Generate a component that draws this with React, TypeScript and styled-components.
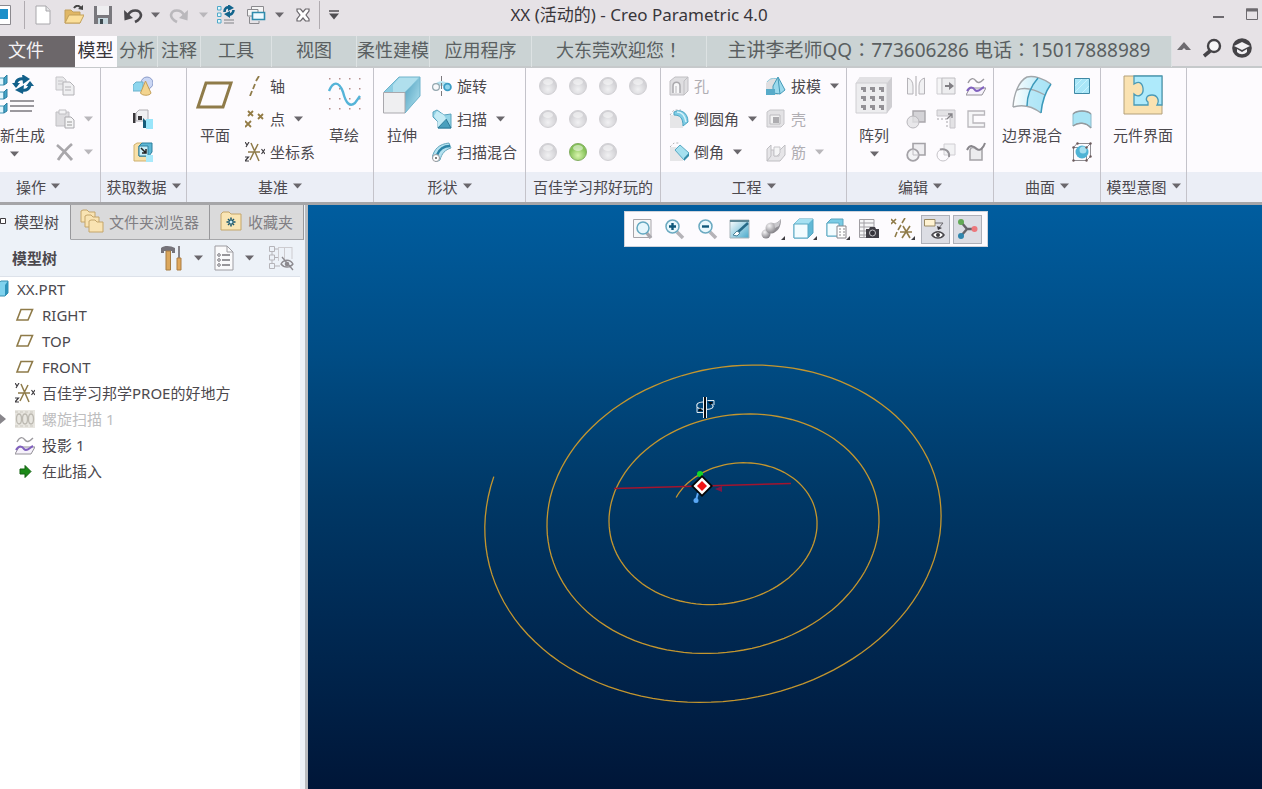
import React from "react";
import styled, { createGlobalStyle } from "styled-components";

const GlobalStyle = createGlobalStyle`
  * { box-sizing: border-box; }
  html, body, #root { height: 100%; }
  body {
    margin: 0;
    font-family: "Noto Sans", "Noto Sans CJK SC", sans-serif;
    font-size: 15px;
    color: #4c494e;
    overflow: hidden;
  }
  button {
    font: inherit;
    color: inherit;
    background: none;
    border: 0;
    padding: 0;
    cursor: default;
  }
  svg { display: block; flex: none; }
`;

/* ---------- layout ---------- */

const Window = styled.div`
  display: flex;
  flex-direction: column;
  height: 100vh;
  background: #e6e2e6;
`;

const TitleBar = styled.header`
  display: grid;
  grid-template-columns: 1fr auto 1fr;
  align-items: center;
  height: 36px;
  flex: none;
`;

const QuickAccess = styled.div`
  display: flex;
  align-items: center;
  height: 36px;
  padding-bottom: 6px;
`;

const QuickButton = styled.button<{ $w?: number }>`
  display: flex;
  align-items: center;
  justify-content: center;
  width: ${(p) => p.$w ?? 30}px;
  height: 28px;
`;

const Rule = styled.span<{ $before?: number }>`
  width: 1px;
  height: 28px;
  margin-left: ${(p) => p.$before ?? 0}px;
  background: #b0abb0;
`;

const Title = styled.h1`
  margin: 0;
  padding: 0 0 6px 16px;
  font-size: 17px;
  line-height: 24px;
  font-weight: 400;
  color: #38353a;
  white-space: nowrap;
`;

const WindowControls = styled.div`
  display: flex;
  justify-content: flex-end;
  gap: 22px;
  padding: 0 4px 8px 0;
`;

const TabBar = styled.nav`
  display: flex;
  height: 32px;
  flex: none;
  border-bottom: 2px solid #c6c9cb;
`;

const TabStrip = styled.div`
  display: flex;
  flex: 1;
  min-width: 0;
  background: #cbd3d4;
`;

const Tab = styled.button<{ $w?: number; $kind?: "file" | "active"; $notice?: boolean }>`
  ${(p) => (p.$w ? `flex: 0 0 ${p.$w}px;` : "flex: 1 1 auto;")}
  height: 31px;
  font-size: ${(p) => (p.$w ? 18 : 19)}px;
  ${(p) => (p.$notice ? `font-family: "Noto Sans", "Noto Sans CJK TC", sans-serif;` : "")}
  line-height: 26px;
  white-space: nowrap;
  color: ${(p) => (p.$kind === "file" ? "#f4f2f4" : p.$kind === "active" ? "#38353a" : "#5a5f61")};
  background: ${(p) => (p.$kind === "file" ? "#6c676a" : p.$kind === "active" ? "#fdfbfe" : "transparent")};
  border-right: 1px solid ${(p) => (p.$kind ? "transparent" : "#dde2e3")};
  padding-bottom: 3px;
  padding-right: ${(p) => (p.$kind === "file" ? 22 : 0)}px;
`;

const TabTools = styled.div`
  display: flex;
  align-items: center;
  gap: 9px;
  width: 90px;
  padding: 0 0 6px 2px;
`;

const ToolButton = styled.button`
  display: flex;
  align-items: center;
  justify-content: center;
  width: 20px;
  height: 24px;
`;

const Ribbon = styled.div`
  display: flex;
  height: 137px;
  flex: none;
  background: linear-gradient(#fdfbfe 0 104px, #ebeef6 104px);
  border-bottom: 3px solid #a5a5a8;
  overflow: hidden;
`;

const Group = styled.section<{ $w: number }>`
  display: flex;
  flex-direction: column;
  flex: 0 0 ${(p) => p.$w}px;
  min-width: 0;
  border-right: 1px solid #c4c3ca;
`;

const GroupBody = styled.div<{ $inset?: number }>`
  display: flex;
  height: 104px;
  padding: 1px 0 0 ${(p) => p.$inset ?? 0}px;
`;

const GroupFooter = styled.button<{ $shift?: number }>`
  display: flex;
  align-items: center;
  justify-content: center;
  gap: 5px;
  height: 28px;
  padding-right: ${(p) => p.$shift ?? 0}px;
  white-space: nowrap;
`;

const BigButton = styled.button<{ $w?: number; $start?: boolean }>`
  display: flex;
  flex-direction: column;
  align-items: ${(p) => (p.$start ? "flex-start" : "center")};
  flex: 0 0 ${(p) => p.$w ?? 56}px;
  padding-top: 6px;
  white-space: nowrap;
`;

const BigLabel = styled.span`
  margin-top: 8px;
  line-height: 24px;
`;

const BigCaret = styled.span<{ $inset?: number }>`
  padding: 4px 0 0 ${(p) => p.$inset ?? 0}px;
`;

const Stack = styled.div<{ $before?: number }>`
  display: flex;
  flex-direction: column;
  margin-left: ${(p) => p.$before ?? 0}px;
`;

const Command = styled.button<{ $muted?: boolean }>`
  display: flex;
  align-items: center;
  gap: 5px;
  height: 33px;
  white-space: nowrap;
  color: ${(p) => (p.$muted ? "#b0aeb3" : "inherit")};
`;

const CaretBox = styled.span`
  padding-left: 4px;
`;

const IconGrid = styled.div<{ $cols: number }>`
  display: grid;
  grid-template-columns: repeat(${(p) => p.$cols}, 30px);
  grid-auto-rows: 33px;
`;

const IconButton = styled.button`
  display: flex;
  align-items: center;
  justify-content: center;
`;

const Workspace = styled.div`
  display: flex;
  flex: 1;
  min-height: 0;
`;

const SidePanel = styled.aside`
  display: flex;
  flex-direction: column;
  flex: 0 0 308px;
  background: #edf2f8;
  border-right: 3px solid #b9bcc0;
`;

const PanelTabs = styled.div`
  display: flex;
  height: 35px;
  flex: none;
`;

const PanelTab = styled.button<{ $w: number; $active?: boolean }>`
  display: flex;
  align-items: center;
  gap: 5px;
  flex: 0 0 ${(p) => p.$w}px;
  padding: 0 0 2px ${(p) => (p.$active ? 0 : 9)}px;
  white-space: nowrap;
  color: ${(p) => (p.$active ? "#4c494e" : "#807e83")};
  background: ${(p) => (p.$active ? "#edf2f8" : "#dadadb")};
  border-right: 1px solid #98989b;
  border-bottom: 1px solid ${(p) => (p.$active ? "#edf2f8" : "#a6a7aa")};
`;

const PanelHeader = styled.div`
  display: flex;
  align-items: center;
  height: 36px;
  flex: none;
  padding: 0 5px 0 12px;
`;

const PanelTitle = styled.h2`
  flex: 1;
  margin: 0;
  font-size: 15px;
  line-height: 24px;
  font-weight: 600;
`;

const HeaderButton = styled.button<{ $w: number }>`
  display: flex;
  align-items: center;
  justify-content: center;
  width: ${(p) => p.$w}px;
  height: 30px;
`;

const Tree = styled.ul`
  flex: 1;
  margin: 0 5px 0 0;
  padding: 0;
  list-style: none;
  background: #ffffff;
  border-top: 1px solid #dde2ea;
`;

const TreeRow = styled.li<{ $root?: boolean; $muted?: boolean }>`
  display: grid;
  grid-template-columns: ${(p) => (p.$root ? "9px 1fr" : "8px 20px 1fr")};
  column-gap: ${(p) => (p.$root ? 8 : 7)}px;
  align-items: center;
  height: 26px;
  line-height: 24px;
  padding-bottom: 2px;
  color: ${(p) => (p.$muted ? "#bebec0" : "inherit")};
`;

const Canvas = styled.main`
  position: relative;
  flex: 1;
  min-width: 0;
  overflow: hidden;
  background: linear-gradient(#005d9f 0%, #004c84 26%, #003866 50%, #002a54 70%, #001638 100%);
`;

const Scene = styled.svg`
  width: 100%;
  height: 100%;
`;

const ViewToolbar = styled.div`
  position: absolute;
  top: 6px;
  left: 316px;
  display: flex;
  align-items: center;
  justify-content: space-between;
  width: 364px;
  height: 36px;
  padding: 0 5px 0 3px;
  background: #fdfbfe;
  border: 1px solid #cfd3dc;
`;

const ViewButton = styled.button<{ $on?: boolean }>`
  display: flex;
  align-items: center;
  justify-content: center;
  width: 29px;
  height: 29px;
  background: ${(p) => (p.$on ? "#dcdde4" : "transparent")};
  border: 1px solid ${(p) => (p.$on ? "#aeb0b8" : "transparent")};
`;

/* ---------- icons ---------- */

type IconProps = { w?: number; h?: number; children: React.ReactNode };
const Icon = ({ w = 20, h = 20, children }: IconProps) => (
  <svg width={w} height={h} viewBox={`0 0 ${w} ${h}`} fill="none" aria-hidden="true">
    {children}
  </svg>
);

const Caret = ({ muted = false }: { muted?: boolean }) => (
  <Icon w={9} h={6}>
    <path d="M0 0.500H9L4.500 5.500Z" fill={muted ? "#b9b7bb" : "#6a676c"} />
  </Icon>
);

const NewFile = () => (
  <Icon><path d="M3 1H13L17 5.500V19H3Z" fill="#fff" stroke="#a8a7ab" /><path d="M13 1V6H17" stroke="#a8a7ab" fill="#e5e5e7" /></Icon>
);
const OpenFile = () => (
  <Icon>
    <path d="M1 18V5H7L9 7H16V18Z" fill="#e0b765" stroke="#c2a05c" />
    <path d="M1 18L5 10H20L16 18Z" fill="#fbdf9a" stroke="#c2a05c" />
    <path d="M10 3C12 0 15 0 17 3" stroke="#444" strokeWidth="2" /><path d="M14 4L19 5L19 0Z" fill="#444" />
  </Icon>
);
const Save = () => (
  <Icon>
    <path d="M1 1H19V19H1Z" fill="#79787d" /><path d="M4 1H16V10H4Z" fill="#eeeef0" />
    <path d="M5 13H15V19H5Z" fill="#c7d8df" /><path d="M7 14H10V19H7Z" fill="#3d4a50" />
  </Icon>
);
const Undo = () => (
  <Icon><path d="M5 10C8 4 17 4 18 10C18 13 16 15 12 17" stroke="#4b494d" strokeWidth="2.600" /><path d="M1 5L1.500 15.500L10 13Z" fill="#4b494d" /></Icon>
);
const Redo = () => (
  <Icon><path d="M15 10C12 4 3 4 2 10C2 13 4 15 8 17" stroke="#bab8bc" strokeWidth="2.600" /><path d="M19 5L18.500 15.500L10 13Z" fill="#bab8bc" /></Icon>
);
const SmallRegen = () => (
  <Icon>
    <path d="M1.500 1.500H5V5H1.500ZM1.500 8H5V11.500H1.500ZM1.500 14.500H5V18H1.500Z" fill="#e4f6fb" stroke="#4fa9c9" />
    <path d="M8.500 7C8.500 3 11 2 13 2.500" stroke="#12648c" strokeWidth="2.600" /><path d="M12 -1L18 3L12 6Z" fill="#12648c" />
    <path d="M17.500 5C17.500 8 15 10 13 9.500" stroke="#12648c" strokeWidth="2.600" /><path d="M14 6L8 9L14 13Z" fill="#12648c" />
    <path d="M8 15H18M8 18H18" stroke="#a3a2a6" strokeWidth="1.500" />
  </Icon>
);
const Windows = () => (
  <Icon>
    <path d="M5.500 1.500H17.500V8H5.500Z" fill="#f5f5f5" stroke="#8b8a8e" /><path d="M1.500 4.500H12V11H1.500Z" fill="#f5f5f5" stroke="#8b8a8e" />
    <path d="M6.500 7.500H18.500V14.500H6.500Z" fill="#eefaff" stroke="#2f8cad" strokeWidth="1.600" />
    <path d="M3.500 12V18.500H13V16" stroke="#8b8a8e" />
  </Icon>
);
const CloseX = () => (
  <Icon w={16} h={16}>
    <path d="M2 2H5.500L8 5L10.500 2H14V4L11 8L14 12V14H10.500L8 11L5.500 14H2V12L5 8L2 4Z" fill="#fff" stroke="#6a676c" strokeWidth="1.200" />
  </Icon>
);

const RegenBig = () => (
  <Icon w={36} h={40}>
    {[0, 14, 28].map((y) => (
      <g key={y}>
        <path d={`M-3 ${y + 3}H4V${y + 10}H-3Z`} fill="#e1f6fd" stroke="#4196b8" />
        <path d={`M4 ${y + 3}L7 ${y}V${y + 8}L4 ${y + 10}Z`} fill="#43a5c9" stroke="#2e7fa0" />
      </g>
    ))}
    <path d="M16 9C16 5 20 3 24 4" stroke="#12608a" strokeWidth="3" /><path d="M22 -1L30 4L23 9Z" fill="#12608a" />
    <path d="M30 9C30 14 26 16 22 15" stroke="#12608a" strokeWidth="3" /><path d="M24 10L15 15L23 19Z" fill="#12608a" />
    <path d="M12 8H20L16 13Z" fill="#12608a" /><path d="M26 11L30 6L34 11Z" fill="#12608a" />
    <path d="M10 26H34M10 31H34M10 36H32" stroke="#9b999e" strokeWidth="2" />
  </Icon>
);
const Copy = () => (
  <Icon>
    <path d="M1 1H8L11 4V14H1Z" fill="#e8e8ea" stroke="#c6c5c9" /><path d="M3 5H8M3 8H8" stroke="#c3c2c6" />
    <path d="M8 6H15L19 10V19H8Z" fill="#efeff1" stroke="#b3b2b6" /><path d="M10 11H16M10 14H16" stroke="#b5b4b8" />
  </Icon>
);
const Paste = () => (
  <Icon>
    <path d="M1 3H14V17H1Z" fill="#dddcdf" stroke="#c0bfc3" /><path d="M4 1H11V5H4Z" fill="#f3f3f5" stroke="#c0bfc3" />
    <path d="M10 8H16L19 11V19H10Z" fill="#f4f4f5" stroke="#a9a8ac" /><path d="M12 13H17M12 16H17" stroke="#999" />
  </Icon>
);
const Delete = () => (
  <Icon><path d="M2 3C7 7 12 12 17 18M17 2C11 7 7 12 3 18" stroke="#a9a7ab" strokeWidth="2.800" /></Icon>
);
const UserFeature = () => (
  <Icon>
    <circle cx="14" cy="7" r="6" fill="#cad6f4" stroke="#8a9bc9" />
    <path d="M0 9L3 6H10V15H0Z" fill="#8ed6ee" stroke="#6bb1cb" />
    <path d="M12.500 5L18 17C17 20 9 20 7.500 17Z" fill="#f3d48f" stroke="#c3a05a" />
  </Icon>
);
const CopyGeom = () => (
  <Icon>
    <path d="M3 4L6 1H15V12H3Z" fill="#f0f0f2" stroke="#b0aeb3" /><path d="M0 4H2.500V14H0Z" fill="#39373b" />
    <path d="M5 7H9V11H5Z" fill="#39373b" /><path d="M10 9L13 12V19H10Z" fill="#155c7a" /><path d="M13 10H20V20H13Z" fill="#99e5fa" />
  </Icon>
);
const Shrinkwrap = () => (
  <Icon>
    <path d="M1 3L4 1H9V6H6V14H14V19H1Z" fill="#f8e0a8" stroke="#cdb06f" />
    <path d="M6 4L9 1H19V10L16 14H6Z" fill="#5db7d5" stroke="#2c7e9d" /><path d="M6 4H15V14H6Z" fill="#c9eef8" stroke="#2c7e9d" />
    <path d="M8 6L13 11M13 7V11H9" stroke="#222" strokeWidth="1.500" /><path d="M13 13H20V20H13Z" fill="#a9e9fa" />
  </Icon>
);
const PlaneBig = () => (
  <Icon w={40} h={40}><path d="M11 8H36L28 32H3Z" stroke="#8f7b49" strokeWidth="3" /></Icon>
);
const Axis = () => (
  <Icon><path d="M14 0L11 5M10 8L8 13M7 15L5 20" stroke="#8f7b49" strokeWidth="1.800" /></Icon>
);
const Points = () => (
  <Icon><path d="M3 2L8 7M8 2L3 7M13 5L18 10M18 5L13 10M0 12L6 18M6 12L0 18" stroke="#927b45" strokeWidth="1.800" /></Icon>
);
const Csys = () => (
  <Icon>
    <path d="M3 10H15M5 18L13 2M6 1L14 19" stroke="#8f7b49" strokeWidth="1.500" />
    <path d="M0 0L2 3M4 0L1 5M0 15H3.500L0 19H4M16.500 7L20 12M20 7L16.500 12" stroke="#3f3d41" strokeWidth="1.200" />
  </Icon>
);
const SketchBig = () => (
  <Icon w={36} h={40}>
    {[3, 13, 23, 33].map((y) => [3, 13, 23, 33].map((x) => <path key={`${x}-${y}`} d={`M${x} ${y}h1.500v1.500h-1.500z`} fill="#b58e8a" />))}
    <path d="M3 16C7 6 13 6 17 17C20 29 24 32 29 28L34 21" stroke="#55b4d8" strokeWidth="2.400" />
  </Icon>
);
const ExtrudeBig = () => (
  <Icon w={40} h={40}>
    <path d="M2 17L17 2H38V20L23 38H2Z" fill="#a7dcec" />
    <path d="M17 2H38L23 17H2Z" fill="#8ccde2" /><path d="M18 2H37L30 10V17H11V10Z" fill="#bfe7f2" opacity="0.700" />
    <path d="M38 2L23 17V38L38 21Z" fill="url(#blueSide)" />
    <path d="M1.500 17.500H23V38H1.500Z" fill="#efeff1" stroke="#a9a8ad" /><path d="M2 17L17 2H38V21L23 38" stroke="#6fb3cb" />
  </Icon>
);
const Revolve = () => (
  <Icon>
    <path d="M2 9C6 4 13 4 18 9L15 12C12 9 7 9 4 12Z" fill="#b4e1ee" />
    <path d="M9.500 0V5M9.500 7V13M9.500 15V20" stroke="#7b797d" />
    <circle cx="4" cy="11" r="3.400" fill="#f7f9fb" stroke="#93a6ae" strokeWidth="1.200" /><circle cx="15.500" cy="11" r="3.400" fill="#8fd4ec" stroke="#3b9cc4" strokeWidth="1.800" />
  </Icon>
);
const Sweep = () => (
  <Icon>
    <path d="M1 3L5 1L12 6L19 5V19H6V13L1 8Z" fill="#93d3e6" stroke="#5aa3bd" />
    <path d="M6 19L14 10L19 19Z" fill="#4a9fbd" stroke="#2d7896" /><path d="M5 2L12 6L14 10L6 18V13L2 7Z" fill="#c5ebf5" />
  </Icon>
);
const SweptBlend = () => (
  <Icon>
    <path d="M0 16C2 7 7 2 17 1L19 6C13 8 10 11 8 18L4 20Z" fill="#b2e1f0" stroke="#6aa8be" />
    <path d="M5 13C7 8 11 4 18 4" stroke="#2b83a6" strokeWidth="2.400" /><circle cx="4" cy="16" r="3.500" fill="#fff" stroke="#9a999d" /><circle cx="4" cy="16" r="1" fill="#555" />
  </Icon>
);
const Ball = ({ on = false }: { on?: boolean }) => (
  <Icon>
    <circle cx="10" cy="10" r="8.500" fill={on ? "url(#ballOn)" : "url(#ballOff)"} stroke={on ? "#83ad62" : "#d0cfd3"} />
    <ellipse cx="10" cy="6" rx="5" ry="3" fill="#fff" opacity="0.500" />
  </Icon>
);
const Hole = () => (
  <Icon>
    <path d="M1 5L6 1H19V15L15 19H1Z" fill="#dfdee1" stroke="#c0bfc3" /><path d="M15 19V5L19 1" stroke="#c0bfc3" />
    <path d="M4 17V10C4 5 11 5 11 10V17" fill="#f7f7f8" stroke="#aaa9ad" strokeWidth="1.500" /><path d="M7 17V10" stroke="#b9b8bc" />
  </Icon>
);
const Round = () => (
  <Icon>
    <path d="M1 6H9C13 8 14 12 14 19H1Z" fill="#e6e6e8" /><path d="M1 6L5 1H12" stroke="#b5b4b8" strokeDasharray="2 2" />
    <path d="M5 3C10 0 19 2 19 13L14 17C14 9 11 6 5 6Z" fill="#7fcde6" stroke="#4ba3c1" />
    <path d="M8 3C13 3 16 7 17 13" stroke="#d8f3fa" strokeWidth="1.500" />
  </Icon>
);
const Chamfer = () => (
  <Icon>
    <path d="M1 5H7L14 12V19H1Z" fill="#e6e6e8" /><path d="M1 5L5 1H10" stroke="#b5b4b8" strokeDasharray="2 2" />
    <path d="M11 3L20 11L15 18L6 8Z" fill="#a5e0ef" stroke="#5aa9c4" /><path d="M20 11V14L15 19V16Z" fill="#358ba9" />
  </Icon>
);
const Draft = () => (
  <Icon>
    <path d="M0 7L5 2H12V19H0Z" fill="#dfdfe1" /><path d="M1 6C4 2 8 2 12 3" stroke="#8cc9dc" />
    <path d="M7 10L12 1L19 14L14 18L7 17Z" fill="#9cd9ec" stroke="#459ab8" /><path d="M12 2L14 18" stroke="#459ab8" /><path d="M0 13H9V19H0Z" fill="#58abc9" />
  </Icon>
);
const Shell = () => (
  <Icon>
    <path d="M1 3L4 1H18V15L15 18H1Z" fill="#e3e2e5" stroke="#c6c5c9" /><path d="M4 6H14V15H4Z" fill="#f3f3f4" stroke="#bbbabe" /><path d="M7 8H13V14H7Z" fill="#adacb0" />
  </Icon>
);
const Rib = () => (
  <Icon>
    <path d="M1 7L5 3V8H8V14H13V9L19 3V13L14 19H1Z" fill="#e6e5e8" stroke="#bfbec2" /><path d="M8 5H14V11L11 14H8Z" fill="#f5f5f6" stroke="#c6c5c9" /><path d="M1 19L5 14V8" stroke="#bfbec2" />
  </Icon>
);
const PatternBig = () => (
  <Icon w={40} h={40}>
    <path d="M2 8L6 2H38V32L33 38H2Z" fill="#cfced2" /><path d="M2 8L6 2H38L33 8Z" fill="#e2e1e4" />
    <path d="M2 8H33V38H2Z" fill="#ededef" stroke="#cfced2" />
    {[12, 21, 30].map((y) => [7, 16, 25].map((x) => <path key={`${x}-${y}`} d={`M${x} ${y}h5v5h-3v-2h-2z`} fill="#929095" />))}
  </Icon>
);
const Mirror = () => (
  <Icon><path d="M10 0V20" stroke="#a9a7ab" /><path d="M1.500 2V18H7V10C7 6 5 3 1.500 2ZM18.500 2V18H13V10C13 6 15 3 18.500 2Z" fill="#f1f1f3" stroke="#b5b3b8" /></Icon>
);
const Extend = () => (
  <Icon><path d="M1 2H6V18H1Z" fill="#f5f5f6" stroke="#cfced2" /><path d="M6 2H19V18H6Z" fill="#ededef" stroke="#bfbec2" /><path d="M9 10H14" stroke="#807e83" strokeWidth="2" /><path d="M13 6L18 10L13 14Z" fill="#807e83" /></Icon>
);
const Project = () => (
  <Icon>
    <path d="M2 7C5 1 8 2 10 5C12 8 15 6 18 3" stroke="#9c9a9f" strokeWidth="1.400" />
    <path d="M4 12H20L16 19H0Z" fill="#f6f2fb" stroke="#949198" /><path d="M1 15C4 10 7 11 9 14C12 17 14 13 18 11" stroke="#8161bf" strokeWidth="2" />
  </Icon>
);
const Merge = () => (
  <Icon><path d="M7 2H19V13H7Z" fill="#d4d3d7" stroke="#a9a7ac" strokeWidth="1.400" /><circle cx="7" cy="13" r="6" fill="#e2e2e5" fillOpacity="0.800" stroke="#b9b7bc" /></Icon>
);
const Trim = () => (
  <Icon><path d="M1 1H19V19H14V7H1Z" fill="#e3e2e5" stroke="#c6c4c9" /><path d="M1 10H11V19" stroke="#a6a4a9" strokeDasharray="2 2" /><path d="M11 10L16 5M12 5H16V9" stroke="#858388" strokeWidth="1.300" /></Icon>
);
const Offset = () => (
  <Icon><path d="M18.500 2H2V18H18.500V14H7V6H18.500Z" fill="#f5f5f7" stroke="#b9b7bc" strokeWidth="1.300" /></Icon>
);
const Intersect = () => (
  <Icon><path d="M7 1.500H19V13H7Z" fill="#eeedf0" stroke="#a4a2a7" strokeWidth="1.600" /><circle cx="7" cy="13" r="5.800" fill="#f3f3f5" stroke="#a4a2a7" strokeWidth="1.800" /><path d="M7 7V13H13" stroke="#c0bec3" /></Icon>
);
const Split = () => (
  <Icon><path d="M8 2H19V13H8Z" fill="#f2f2f4" stroke="#d0ced3" /><circle cx="7" cy="13" r="6" stroke="#c6c4c9" /><path d="M4 7.500C10 6 14 10 13 15" stroke="#97959a" strokeWidth="2" /></Icon>
);
const Solidify = () => (
  <Icon><path d="M4 8V18H16V6C14 9 12 8 10 7C7 5 5 5 4 8Z" fill="#ececee" stroke="#a4a2a7" strokeWidth="1.500" /><path d="M1 8C4 2 8 4 11 7C14 9 17 7 19 1" stroke="#89878c" strokeWidth="2" /></Icon>
);
const BoundaryBig = () => (
  <Icon w={40} h={40}>
    <path d="M1 32C2 18 7 6 15 2C22 0 32 4 39 9C34 16 30 27 29 38C20 31 11 29 1 32Z" fill="url(#surface)" />
    <path d="M26 3C32 4 36 6 39 9C34 16 30 27 29 38L15 31C16 19 20 11 26 3Z" fill="#a9e4f6" opacity="0.700" />
    <path d="M1 32C2 18 7 6 15 2C22 0 32 4 39 9M1 32C11 29 20 31 29 38M5 15C14 11 24 15 33 20" stroke="#a2a7ab" strokeWidth="1.400" />
    <path d="M26 3C19 11 15 19 15 31M39 9C34 16 30 27 29 38" stroke="#3b99ba" strokeWidth="1.500" />
  </Icon>
);
const Fill = () => (
  <Icon><path d="M2.500 2.500H17.500V17.500H2.500Z" fill="#a9e6f8" stroke="#3f88a4" /><path d="M3 10L10 3M3 16L16 3M10 17L17 10" stroke="#c9f3fd" /></Icon>
);
const StyleSurface = () => (
  <Icon><path d="M1 5C5 1 15 1 19 5V19C14 13 6 13 1 17Z" fill="#a9e4f5" stroke="#8ab9c9" /><path d="M1 5C5 1 15 1 19 5M1 17C6 13 14 13 19 19" stroke="#949a9e" strokeWidth="1.400" /></Icon>
);
const Freestyle = () => (
  <Icon>
    <path d="M1.500 5.500L5 1.500H18.500V14.500L14.500 18.500H1.500ZM1.500 5.500H14.500V18.500M14.500 5.500L18.500 1.500" stroke="#8f8d92" />
    <circle cx="10" cy="10" r="6.500" fill="#4fb3d5" /><circle cx="11" cy="8" r="3.500" fill="#a5dff0" />
    {[[1, 5], [14, 5], [18, 1], [1, 18], [14, 18], [18, 14], [5, 1]].map(([x, y]) => <circle key={`${x}-${y}`} cx={x + 0.5} cy={y + 0.5} r="1.200" fill="#6b5a5c" />)}
  </Icon>
);
const InterfaceBig = () => (
  <Icon w={40} h={40}>
    <path d="M1 1H39V39H1Z" fill="#fae2b1" stroke="#b3a07a" />
    <path d="M11 1H39V30H34C37 25 34 20 29 20C23 20 22 25 25 27V30H11V19C15 23 21 20 20 13C19 7 15 6 11 9Z" fill="#aeeafb" stroke="#4a9ab7" strokeWidth="1.300" />
  </Icon>
);

const Folders = () => (
  <Icon w={24} h={24}>
    {[[0, 0], [4, 5], [8, 10]].map(([x, y]) => (
      <path key={x} d={`M${x + 1} ${y + 12}V${y + 2}L${x + 3} ${y + 1}H${x + 7}L${x + 9} ${y + 3}H${x + 15}V${y + 13}H${x + 1}Z`} fill="#f9e3b2" stroke="#c4a56a" />
    ))}
  </Icon>
);
const Favorites = () => (
  <Icon w={24} h={24}>
    <path d="M2 21V5L4 3H10L12 5H22V21Z" fill="#fae5b4" stroke="#c4a56a" />
    <path d="M12 8.500V17.500M7.500 13H16.500M9 10L15 16M15 10L9 16" stroke="#19566d" strokeWidth="1.500" /><circle cx="12" cy="13" r="1.500" fill="#d7f1f8" />
  </Icon>
);
const Tools = () => (
  <Icon w={22} h={26}>
    <path d="M0 3C4 0 10 1 14 3V8H11V6H3V8H0Z" fill="#75737a" /><path d="M5 6H9.500V25H5Z" fill="#dba75c" stroke="#a67c42" />
    <path d="M18 1V13" stroke="#86848a" strokeWidth="2" /><path d="M16 13H20V25H16Z" fill="#e0a85c" stroke="#ab7c42" />
  </Icon>
);
const TreeSettings = () => (
  <Icon w={22} h={26}>
    <path d="M2 1H14L20 7V25H2Z" fill="#fafafb" stroke="#9d9ca1" /><path d="M14 1V7H20" stroke="#9d9ca1" />
    <path d="M9 10H17M9 15H17M9 20H17" stroke="#77757b" strokeWidth="1.300" />
    <circle cx="6" cy="10" r="1.300" stroke="#77757b" /><circle cx="6" cy="15" r="1.300" stroke="#77757b" /><circle cx="6" cy="20" r="1.300" stroke="#77757b" />
  </Icon>
);
const TreeFilter = () => (
  <Icon w={26} h={26}>
    <path d="M1.500 1.500H6.500V6.500H1.500ZM1.500 10H6.500V15H1.500ZM1.500 18.500H6.500V23.500H1.500ZM4 6.500V10M4 15V18.500M6.500 4H10M6.500 12.500H10M6.500 21H12" stroke="#b5b4b9" />
    <path d="M10.500 2V16M16.500 2V14M24 2V14M10 2.500H24" stroke="#cdccd0" />
    <path d="M13 19C16 14 22 14 25 19C22 23 16 23 13 19ZM14 12L25 25" stroke="#8c8a8f" strokeWidth="1.300" /><circle cx="19" cy="19" r="2.300" fill="#8c8a8f" />
  </Icon>
);
const PartIcon = () => (
  <Icon w={9} h={18}><path d="M-3 4L1 1H8V13L5 16H-3Z" fill="#7fd2ee" stroke="#3990b1" /><path d="M8 1L5 5V16L8 13Z" fill="#2d93ba" /></Icon>
);
const PlaneIcon = () => (
  <Icon><path d="M6 4.500H17.500L13 15H2Z" stroke="#8f7b49" strokeWidth="1.600" /></Icon>
);
const HelixIcon = () => (
  <Icon>
    <path d="M0 1H20V19H0Z" fill="#e8e6e0" />
    {[4, 10, 16].map((x) => <ellipse key={x} cx={x} cy="10" rx="2.500" ry="5" stroke="#bcb9b1" strokeWidth="1.300" />)}
    <path d="M0 3H20M0 17H20" stroke="#cbc8c0" strokeDasharray="3 2" />
  </Icon>
);
const InsertIcon = () => (
  <Icon><path d="M5 8H10V4.500L16 10.500L10 16.500V13H5Z" fill="#1c8a18" stroke="#126011" /></Icon>
);

const Flyout = () => <path d="M24 18V22H20Z" fill="#3f3d42" />;
const Lens = ({ sign }: { sign?: "+" | "-" }) => (
  <>
    <path d="M14 14L20 20" stroke="#b5b3b8" strokeWidth="3.500" />
    <circle cx="9.500" cy="8.500" r="6.500" fill="#e9f8fd" stroke="#6aa9c0" strokeWidth="1.500" />
    {sign && <path d={sign === "+" ? "M6 8.500H13M9.500 5V12" : "M6 8.500H13"} stroke="#0f587a" strokeWidth="2.400" />}
  </>
);
const viewTools: { name: string; on?: boolean; art: React.ReactNode }[] = [
  { name: "重新调整", art: <><path d="M2.500 1.500H20V19.500H2.500Z" fill="#f7f7f8" stroke="#a6a4a9" /><path d="M15 14L20 20" stroke="#aaa8ad" strokeWidth="3.500" /><circle cx="12" cy="10" r="6" fill="#e5f6fc" stroke="#64a8c0" strokeWidth="1.500" /></> },
  { name: "放大", art: <Lens sign="+" /> },
  { name: "缩小", art: <Lens sign="-" /> },
  { name: "重画", art: <><path d="M2 2H21V20H2Z" fill="url(#repaint)" stroke="#a8b5bb" /><path d="M2 2H21V4H2Z" fill="#5b8594" /><path d="M10 14L20 5" stroke="#276a88" strokeWidth="2.500" /><path d="M5 17L9 13L12 15L9 18Z" fill="#fff" stroke="#4a8198" /></> },
  { name: "渲染选项", art: <><path d="M11 15C17 14 20 9 20 1C18 4 14 6 10 6Z" fill="#8f8d93" /><circle cx="5" cy="16" r="4.500" fill="url(#metal)" /><circle cx="10" cy="10" r="5.500" fill="url(#metal)" /><path d="M13 5C16 5 18 4 20 1L18 8L14 10Z" fill="#c9c8cc" /><Flyout /></> },
  { name: "显示样式", art: <><path d="M1 6L6 1H20V15L15 20H1Z" fill="#62b8d6" stroke="#55a5c1" /><path d="M1 6L6 1H20L15 6Z" fill="#a6e1f2" /><path d="M1 6H15V20H1Z" fill="#f3fcff" stroke="#5aa9c4" /><Flyout /></> },
  { name: "已保存方向", art: <><path d="M1 5L5 1H17V10H13V18H1Z" fill="#79cbe4" stroke="#5aa5bf" /><path d="M1 5H13V18H1Z" fill="#f3fcff" stroke="#5aa9c4" /><path d="M11 8H20V20H11Z" fill="#fff" stroke="#88868b" /><path d="M13 11H15M17 11H19M13 14H15M17 14H19M13 17H15M17 17H19" stroke="#88868b" /><Flyout /></> },
  { name: "视图管理器", art: <><path d="M1.500 1.500H16V19.500H1.500ZM1.500 5H16M1.500 9H16M1.500 13H16M1.500 17H16M6 1V20" fill="#f6f6f7" stroke="#a09ea3" /><path d="M8 11H11L12 9H17L18 11H21V20H8Z" fill="#403e45" /><circle cx="14.500" cy="15" r="3" fill="#35333a" stroke="#c4c3c7" /></> },
  { name: "基准显示过滤器", art: <><path d="M0 1L5 6M5 1L0 6M14 0L11 5M10 7L7 12M6 14L4 19M9 14H21M11 20L19 8M12 8L19 20" stroke="#8f7b49" strokeWidth="1.600" /><Flyout /></> },
  { name: "注释显示", on: true, art: <><path d="M1.500 1.500H12V8H1.500Z" fill="#fff3d3" stroke="#9a8a64" /><path d="M12 5H20L15 11" stroke="#6a686d" /><path d="M14 8L15 12L19 10" fill="#3d3b40" /><path d="M9 17C12 12.500 18 12.500 21 17C18 21 12 21 9 17Z" fill="#fff" stroke="#4a484d" strokeWidth="1.500" /><circle cx="15" cy="17" r="2" fill="#3d3b40" /></> },
  { name: "旋转中心", on: true, art: <><path d="M5 4L11 11L5 18M11 11H18" stroke="#656369" strokeWidth="2.400" /><circle cx="5" cy="4" r="3" fill="#62a956" /><circle cx="5" cy="18" r="3" fill="#3086ae" /><circle cx="18.500" cy="11" r="3" fill="#ec777c" /></> },
];

/* ---------- model geometry ---------- */

// Elliptical spiral; t is measured in turns, clockwise from the +X direction.
function spiralPath(from: number, to: number, steps: number) {
  const points: string[] = [];
  for (let i = 0; i <= steps; i++) {
    const t = from + ((to - from) * i) / steps;
    const angle = 2 * Math.PI * t;
    const dy = (70.5 + 49 * t) * Math.sin(angle);
    const dx = (88.5 + 62 * t) * Math.cos(angle) - 0.1 * dy;
    points.push(`${(728.5 + dx).toFixed(1)} ${(521.5 + dy).toFixed(1)}`);
  }
  return `M${points.join("L")}`;
}

const ModelScene = () => (
  <Scene viewBox="308 205 954 584" preserveAspectRatio="xMinYMin slice" fill="none" role="img" aria-label="投影 1">
    <defs>
      <linearGradient id="blueSide" x1="0" y1="0" x2="1" y2="1"><stop stopColor="#4e9fbe" /><stop offset="1" stopColor="#b7e6f3" /></linearGradient>
      <linearGradient id="surface"><stop stopColor="#ffffff" /><stop offset="1" stopColor="#a2e2f5" /></linearGradient>
      <linearGradient id="repaint" x2="1" y2="1"><stop stopColor="#ffffff" /><stop offset="1" stopColor="#48a9cb" /></linearGradient>
      <radialGradient id="metal" cx="0.350" cy="0.300" r="0.800"><stop stopColor="#f4f3f5" /><stop offset="1" stopColor="#77757b" /></radialGradient>
      <radialGradient id="ballOff" cy="0.700"><stop stopColor="#f1f1f3" /><stop offset="1" stopColor="#d3d2d6" /></radialGradient>
      <radialGradient id="ballOn" cy="0.700"><stop stopColor="#d9f5ae" /><stop offset="1" stopColor="#85c257" /></radialGradient>
    </defs>
    <path d={spiralPath(-0.42, 2.537, 360)} stroke="#c3962f" strokeWidth="1.300" />
    <path d="M614 488.500L791 483.500" stroke="#a3142e" strokeWidth="1.600" />
    <path d="M715 489L722 486V492Z" fill="#7d1745" />
    <path d="M698 493L696 500" stroke="#5aa7f4" strokeWidth="2" /><circle cx="696" cy="500.500" r="2.500" fill="#5aa7f4" />
    <circle cx="700" cy="474" r="3" fill="#12d726" />
    <path d="M702 475L713 486L702 497L691 486Z" fill="#050505" />
    <path d="M702 477.500L710.500 486L702 494.500L693.500 486Z" fill="#fff" />
    <path d="M702 481L707 486L702 491L697 486Z" fill="#f01414" />
    <path d="M705 397V418" stroke="#e9f1f6" strokeWidth="4" />
    <path d="M703 402C698 402 696 404 697 407C698 409 706 410 710 409C714 408 714 405 711 404" stroke="#dfe9f0" strokeWidth="1.200" />
    <path d="M707.500 400.500H714V405M697 407.500V412.500H703" stroke="#dfe9f0" />
    <path d="M705 397V418" stroke="#080b10" strokeWidth="2" />
    <path d="M708 402H713L711 405ZM698 411H703L700 408Z" fill="#080b10" />
  </Scene>
);

/* ---------- page ---------- */

const tabs: { label: string; w?: number; notice?: boolean }[] = [
  { label: "分析", w: 41 },
  { label: "注释", w: 43 },
  { label: "工具", w: 71 },
  { label: "视图", w: 85 },
  { label: "柔性建模", w: 73 },
  { label: "应用程序", w: 102 },
  { label: "大东莞欢迎您！", w: 175, notice: true },
  { label: "主讲李老师QQ：773606286 电话：15017888989", notice: true },
];

type CmdProps = { icon: React.ReactNode; label?: string; caret?: boolean; muted?: boolean; title?: string };
const Cmd = ({ icon, label, caret, muted, title }: CmdProps) => (
  <Command $muted={muted} disabled={muted} aria-label={title ?? label}>
    {icon}
    {label && <span>{label}</span>}
    {caret && <CaretBox><Caret muted={muted} /></CaretBox>}
  </Command>
);

const editIcons: [string, React.ReactNode][] = [
  ["镜像", <Mirror />], ["延伸", <Extend />], ["投影", <Project />],
  ["合并", <Merge />], ["修剪", <Trim />], ["偏移", <Offset />],
  ["相交", <Intersect />], ["分割", <Split />], ["实体化", <Solidify />],
];

const treeItems: { label: string; icon: React.ReactNode; muted?: boolean }[] = [
  { label: "RIGHT", icon: <PlaneIcon /> },
  { label: "TOP", icon: <PlaneIcon /> },
  { label: "FRONT", icon: <PlaneIcon /> },
  { label: "百佳学习邦学PROE的好地方", icon: <Csys /> },
  { label: "螺旋扫描 1", icon: <HelixIcon />, muted: true },
  { label: "投影 1", icon: <Project /> },
  { label: "在此插入", icon: <InsertIcon /> },
];

export default function App() {
  return (
    <Window>
      <GlobalStyle />
      <TitleBar>
        <QuickAccess>
          <Icon w={12} h={22}><path d="M-4 1.500H10.500V20.500H-4Z" fill="#fff" stroke="#8b898e" /><path d="M-4 5H8V15H-4Z" fill="#1c8fc9" /></Icon>
          <Rule $before={12} />
          <QuickButton $w={36} aria-label="新建"><NewFile /></QuickButton>
          <QuickButton $w={26} aria-label="打开"><OpenFile /></QuickButton>
          <QuickButton $w={32} aria-label="保存"><Save /></QuickButton>
          <QuickButton $w={28} aria-label="撤消"><Undo /></QuickButton>
          <QuickButton $w={16} aria-label="撤消列表"><Caret /></QuickButton>
          <QuickButton $w={32} aria-label="重做"><Redo /></QuickButton>
          <QuickButton $w={16} aria-label="重做列表"><Caret muted /></QuickButton>
          <QuickButton aria-label="重新生成"><SmallRegen /></QuickButton>
          <QuickButton aria-label="窗口"><Windows /></QuickButton>
          <QuickButton $w={16} aria-label="窗口列表"><Caret /></QuickButton>
          <QuickButton $w={32} aria-label="关闭"><CloseX /></QuickButton>
          <Rule />
          <QuickButton $w={28} aria-label="自定义快速访问工具栏">
            <Icon w={12} h={10}><path d="M1 1H11" stroke="#4f4d51" strokeWidth="1.500" /><path d="M1 3.500H11L6 9.500Z" fill="#4f4d51" /></Icon>
          </QuickButton>
        </QuickAccess>
        <Title>XX (活动的) - Creo Parametric 4.0</Title>
        <WindowControls>
          <button aria-label="最小化"><Icon w={12} h={12}><path d="M1 9H12" stroke="#6d6a6f" strokeWidth="2" /></Icon></button>
          <button aria-label="最大化"><Icon w={12} h={12}><path d="M0.500 1H11.500V11.500H0.500Z" stroke="#6d6a6f" /><path d="M0 2H12" stroke="#6d6a6f" strokeWidth="3" /></Icon></button>
        </WindowControls>
      </TitleBar>

      <TabBar>
        <TabStrip>
          <Tab $w={75} $kind="file">文件</Tab>
          <Tab $w={42} $kind="active">模型</Tab>
          {tabs.map((tab) => <Tab key={tab.label} $w={tab.w} $notice={tab.notice}>{tab.label}</Tab>)}
        </TabStrip>
        <TabTools>
          <ToolButton aria-label="最小化功能区"><Icon w={14} h={12}><path d="M0 8L7 0L14 8H9L7 6L5 8Z" fill="#6d6a6f" /></Icon></ToolButton>
          <ToolButton aria-label="命令搜索"><Icon><circle cx="11" cy="8" r="6" fill="#f8f7f8" stroke="#454347" strokeWidth="2.400" /><path d="M7 13L1 18" stroke="#454347" strokeWidth="3.600" /></Icon></ToolButton>
          <ToolButton aria-label="学习中心"><Icon><circle cx="10" cy="10" r="9.800" fill="#454347" /><path d="M2 8L10 4L18 8L10 12Z" fill="#f3f1f4" /><path d="M5 11V14C8 17 12 17 15 14V11L10 14Z" fill="#f3f1f4" /></Icon></ToolButton>
        </TabTools>
      </TabBar>

      <Ribbon>
        <Group $w={101}>
          <GroupBody>
            <BigButton $w={54} $start><RegenBig /><BigLabel>新生成</BigLabel><BigCaret $inset={10}><Caret /></BigCaret></BigButton>
            <Stack $before={1}>
              <Cmd title="复制" icon={<Copy />} muted />
              <Cmd title="粘贴" icon={<Paste />} caret muted />
              <Cmd title="删除" icon={<Delete />} caret muted />
            </Stack>
          </GroupBody>
          <GroupFooter $shift={24}>操作 <Caret /></GroupFooter>
        </Group>
        <Group $w={86}>
          <GroupBody $inset={32}>
            <Stack>
              <Cmd title="用户定义特征" icon={<UserFeature />} />
              <Cmd title="复制几何" icon={<CopyGeom />} />
              <Cmd title="收缩包络" icon={<Shrinkwrap />} />
            </Stack>
          </GroupBody>
          <GroupFooter>获取数据 <Caret /></GroupFooter>
        </Group>
        <Group $w={187}>
          <GroupBody>
            <BigButton><PlaneBig /><BigLabel>平面</BigLabel></BigButton>
            <Stack $before={2}>
              <Cmd label="轴" icon={<Axis />} />
              <Cmd label="点" icon={<Points />} caret />
              <Cmd label="坐标系" icon={<Csys />} />
            </Stack>
            <BigButton $w={58}><SketchBig /><BigLabel>草绘</BigLabel></BigButton>
          </GroupBody>
          <GroupFooter>基准 <Caret /></GroupFooter>
        </Group>
        <Group $w={152}>
          <GroupBody>
            <BigButton><ExtrudeBig /><BigLabel>拉伸</BigLabel></BigButton>
            <Stack $before={2}>
              <Cmd label="旋转" icon={<Revolve />} />
              <Cmd label="扫描" icon={<Sweep />} caret />
              <Cmd label="扫描混合" icon={<SweptBlend />} />
            </Stack>
          </GroupBody>
          <GroupFooter>形状 <Caret /></GroupFooter>
        </Group>
        <Group $w={135}>
          <GroupBody $inset={7}>
            <IconGrid $cols={4}>
              {Array.from({ length: 12 }, (_, i) =>
                i === 7 || i === 11 ? <span key={i} /> : <IconButton key={i} aria-label={`工具 ${i + 1}`}><Ball on={i === 9} /></IconButton>
              )}
            </IconGrid>
          </GroupBody>
          <GroupFooter>百佳学习邦好玩的</GroupFooter>
        </Group>
        <Group $w={186}>
          <GroupBody $inset={8}>
            <Stack>
              <Cmd label="孔" icon={<Hole />} muted />
              <Cmd label="倒圆角" icon={<Round />} caret />
              <Cmd label="倒角" icon={<Chamfer />} caret />
            </Stack>
            <Stack $before={9}>
              <Cmd label="拔模" icon={<Draft />} caret />
              <Cmd label="壳" icon={<Shell />} muted />
              <Cmd label="筋" icon={<Rib />} caret muted />
            </Stack>
          </GroupBody>
          <GroupFooter>工程 <Caret /></GroupFooter>
        </Group>
        <Group $w={147}>
          <GroupBody>
            <BigButton $w={54}><PatternBig /><BigLabel>阵列</BigLabel><BigCaret><Caret /></BigCaret></BigButton>
            <IconGrid $cols={3}>
              {editIcons.map(([name, icon]) => <IconButton key={name} aria-label={name}>{icon}</IconButton>)}
            </IconGrid>
          </GroupBody>
          <GroupFooter>编辑 <Caret /></GroupFooter>
        </Group>
        <Group $w={107}>
          <GroupBody $inset={8}>
            <BigButton $w={60}><BoundaryBig /><BigLabel>边界混合</BigLabel></BigButton>
            <Stack $before={10}>
              <Cmd title="填充" icon={<Fill />} />
              <Cmd title="样式" icon={<StyleSurface />} />
              <Cmd title="自由式" icon={<Freestyle />} />
            </Stack>
          </GroupBody>
          <GroupFooter>曲面 <Caret /></GroupFooter>
        </Group>
        <Group $w={86}>
          <GroupBody>
            <BigButton $w={84}><InterfaceBig /><BigLabel>元件界面</BigLabel></BigButton>
          </GroupBody>
          <GroupFooter>模型意图 <Caret /></GroupFooter>
        </Group>
      </Ribbon>

      <Workspace>
        <SidePanel>
          <PanelTabs>
            <PanelTab $w={71} $active>
              <Icon w={9} h={10}><path d="M0.500 2.500H5.500V7.500H0.500Z" fill="#fff" stroke="#3f3d41" /></Icon>
              模型树
            </PanelTab>
            <PanelTab $w={139}><Folders />文件夹浏览器</PanelTab>
            <PanelTab $w={94}><Favorites />收藏夹</PanelTab>
          </PanelTabs>
          <PanelHeader>
            <PanelTitle>模型树</PanelTitle>
            <HeaderButton $w={24} aria-label="设置"><Tools /></HeaderButton>
            <HeaderButton $w={28} aria-label="设置列表"><Caret /></HeaderButton>
            <HeaderButton $w={24} aria-label="显示"><TreeSettings /></HeaderButton>
            <HeaderButton $w={26} aria-label="显示列表"><Caret /></HeaderButton>
            <HeaderButton $w={38} aria-label="树过滤器"><TreeFilter /></HeaderButton>
          </PanelHeader>
          <Tree>
            <TreeRow $root><PartIcon /><span>XX.PRT</span></TreeRow>
            {treeItems.map((item) => (
              <TreeRow key={item.label} $muted={item.muted}>
                {item.muted ? <Icon w={8} h={10}><path d="M0 0L6 5L0 10Z" fill="#88868b" /></Icon> : <span />}
                {item.icon}
                <span>{item.label}</span>
              </TreeRow>
            ))}
          </Tree>
        </SidePanel>
        <Canvas>
          <ModelScene />
          <ViewToolbar role="toolbar" aria-label="视图">
            {viewTools.map((tool) => (
              <ViewButton key={tool.name} $on={tool.on} aria-label={tool.name} aria-pressed={tool.on}>
                <Icon w={24} h={22}>{tool.art}</Icon>
              </ViewButton>
            ))}
          </ViewToolbar>
        </Canvas>
      </Workspace>
    </Window>
  );
}
